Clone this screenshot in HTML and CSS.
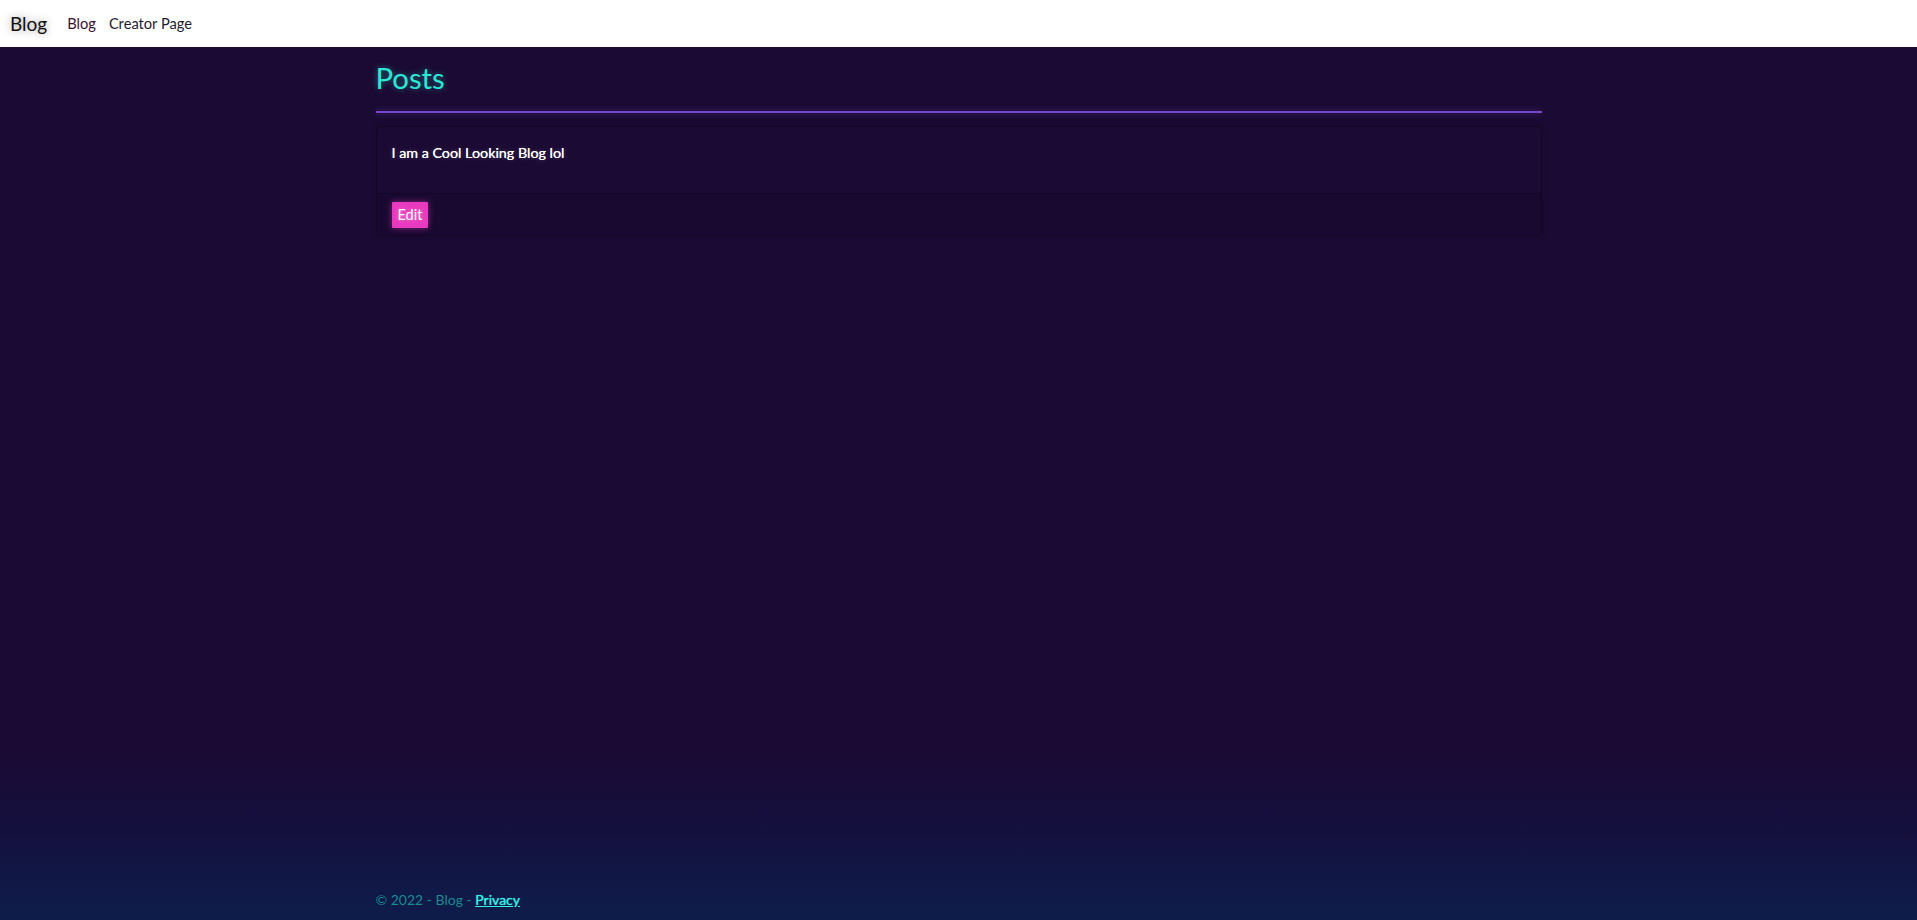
FILE: index.html
```html
<!DOCTYPE html>
<html lang="en">
<head>
<meta charset="utf-8">
<title>Blog</title>
<link rel="stylesheet" href="styles.css">
</head>
<body>
<header class="navbar">
  <a class="brand" href="#">Blog</a>
  <nav class="nav">
    <a class="nav-link active" href="#">Blog</a>
    <a class="nav-link" href="#">Creator Page</a>
  </nav>
</header>
<main class="container">
  <h2 class="page-title">Posts</h2>
  <hr class="divider">
  <div class="card">
    <div class="card-body">I am a Cool Looking Blog lol</div>
    <div class="card-footer"><a class="btn-edit" href="#">Edit</a></div>
  </div>
</main>
<footer class="footer">
  <div class="container footer-inner">&copy; 2022 - Blog - <a class="footer-link" href="#">Privacy</a></div>
</footer>
</body>
</html>
```

FILE: styles.css
```css
* { box-sizing: border-box; }
html, body { margin: 0; padding: 0; }
body {
  min-height: 920px;
  display: flex;
  flex-direction: column;
  font-family: Lato, "Open Sans", sans-serif;
  font-size: 14.67px;
  color: #fff;
  background: linear-gradient(to bottom, #1b0a33 0, #1b0a33 745px, #150f3d 820px, #0e1d4b 920px);
}
a { text-decoration: none; }
.navbar {
  height: 47px;
  background: #fff;
  display: flex;
  align-items: center;
  padding: 0 10px;
}
.brand {
  font-size: 19px;
  color: #111;
  text-shadow: 0 0 8px rgba(0,0,0,0.4);
  margin-right: 20px;
}
.nav { display: flex; gap: 13px; }
.nav-link { font-size: 14.67px; color: #1f1b33; }
.nav-link.active { color: #3a0f33; }
.container {
  width: 1166px;
  margin: 0 auto;
}
.page-title {
  margin: 13px 0 0;
  font-size: 29.3px;
  line-height: 1.2;
  font-weight: 400;
  color: #2de6d4;
  text-shadow: 0 0 6px rgba(45,230,212,0.45);
}
.divider {
  margin: 16px 0 13px;
  border: 0;
  height: 2px;
  background: #7347c9;
  box-shadow: 0 0 6px rgba(115,71,201,0.6);
}
.card {
  border: 1px solid #140726;
  border-radius: 3px;
  background: #1b0a34;
  box-shadow: 0 0 6px rgba(0,0,0,0.15);
}
.card-body {
  padding: 14px 15px 29px;
  font-size: 14.3px;
  line-height: 23px;
  font-weight: 400;
  color: #fff;
  text-shadow: 0 0 0.6px #fff, 0 0 4px rgba(255,255,255,0.25);
}
.card-footer {
  border-top: 1px solid #130726;
  background: #190930;
  padding: 8px 15px 7px;
}
.btn-edit {
  display: inline-block;
  height: 26px;
  line-height: 26px;
  padding: 0 6px;
  font-size: 14.5px;
  color: #fff;
  background: #e83abf;
  border-radius: 1px;
  text-shadow: 0 0 4px rgba(255,255,255,0.35);
  box-shadow: 0 0 6px rgba(232,58,191,0.55);
}
.footer { margin-top: auto; }
.footer-inner {
  padding-bottom: 9px;
  font-size: 14px;
  line-height: 22px;
  color: #1c8a8e;
}
.footer-link {
  color: #36efe6;
  font-weight: 400;
  text-decoration: underline;
  text-shadow: 0 0 1px #36efe6;
}
```
